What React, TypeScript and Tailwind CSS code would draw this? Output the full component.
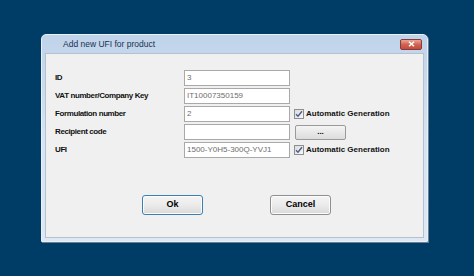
import React from "react";

type Row = {
  label: string;
  value: string;
  extra?: "auto" | "dots";
};

const rows: Row[] = [
  { label: "ID", value: "3" },
  { label: "VAT number/Company Key", value: "IT10007350159" },
  { label: "Formulation number", value: "2", extra: "auto" },
  { label: "Recipient code", value: "", extra: "dots" },
  { label: "UFI", value: "1500-Y0H5-300Q-YVJ1", extra: "auto" },
];

function CheckBox() {
  return (
    <span className="flex h-[10px] w-[10px] items-center justify-center border border-[#8f8f8f] bg-gradient-to-br from-[#dcdcdc] to-[#f7f7f7]">
      <svg width="8" height="8" viewBox="0 0 8 8">
        <path d="M1 4.2 L3 6.3 L7 1.2" fill="none" stroke="#4a5f8f" strokeWidth="1.4" />
      </svg>
    </span>
  );
}

function WinButton({ label, focused }: { label: string; focused?: boolean }) {
  return (
    <button
      className={
        "h-[20px] w-[61px] rounded-[3px] border bg-gradient-to-b from-[#f4f4f4] via-[#ebebeb] to-[#d9d9d9] text-[9px] font-bold text-black shadow-[inset_0_0_0_1px_#fcfcfc] " +
        (focused ? "border-[#3c7fb1]" : "border-[#8e8f8f]")
      }
    >
      {label}
    </button>
  );
}

export default function App() {
  return (
    <div
      className="h-[276px] w-[474px] bg-[#003d66] pl-[41px] pt-[34px]"
      style={{ fontFamily: '"Liberation Sans", Arial, sans-serif' }}
    >
      <div className="flex h-[208px] w-[387px] flex-col rounded-t-[5px] border border-[#e9f0f7] bg-gradient-to-b from-[#bfd3ea] via-[#d7e4f2] to-[#dde8f4] px-[3px] pb-[3px] shadow-[1px_1px_0_#6a7f96]">
        <div className="flex h-[18px] items-center justify-between pl-[18px] pr-[2px]">
          <span className="text-[8.5px] text-[#1a3150]">Add new UFI for product</span>
          <span className="flex h-[11px] w-[22px] items-center justify-center rounded-[2px] border border-[#8a3a3a] bg-gradient-to-b from-[#e9a797] via-[#d06450] to-[#c44a3a]">
            <svg width="7" height="6" viewBox="0 0 7 6">
              <path d="M1 0.8 L6 5.2 M6 0.8 L1 5.2" stroke="#ffffff" strokeWidth="1.5" />
            </svg>
          </span>
        </div>
        <div className="flex flex-1 flex-col border border-[#b4c1cf] bg-[#f0f0f0] pl-[9px] pt-[16px]">
          <div className="flex flex-col gap-[2px]">
            {rows.map((row) => (
              <div key={row.label} className="flex h-[16px] items-center">
                <span className="w-[129px] text-[8px] font-bold tracking-[-0.4px] text-[#111]">
                  {row.label}
                </span>
                <div className="flex h-[16px] w-[106px] items-center border border-[#a9a9a9] bg-white pl-[2px] text-[8px] text-[#6d6d6d]">
                  {row.value}
                </div>
                {row.extra === "auto" && (
                  <div className="ml-[4px] flex items-center gap-[2px]">
                    <CheckBox />
                    <span className="text-[8px] font-bold text-[#111]">
                      Automatic Generation
                    </span>
                  </div>
                )}
                {row.extra === "dots" && (
                  <button className="ml-[5px] h-[15px] w-[51px] rounded-[2px] border border-[#9a9a9a] bg-gradient-to-b from-[#f4f4f4] to-[#dcdcdc] text-[8px] font-bold leading-none text-black">
                    ...
                  </button>
                )}
              </div>
            ))}
          </div>
          <div className="mt-[37px] flex gap-[67px] pl-[87px]">
            <WinButton label="Ok" focused />
            <WinButton label="Cancel" />
          </div>
        </div>
      </div>
    </div>
  );
}
